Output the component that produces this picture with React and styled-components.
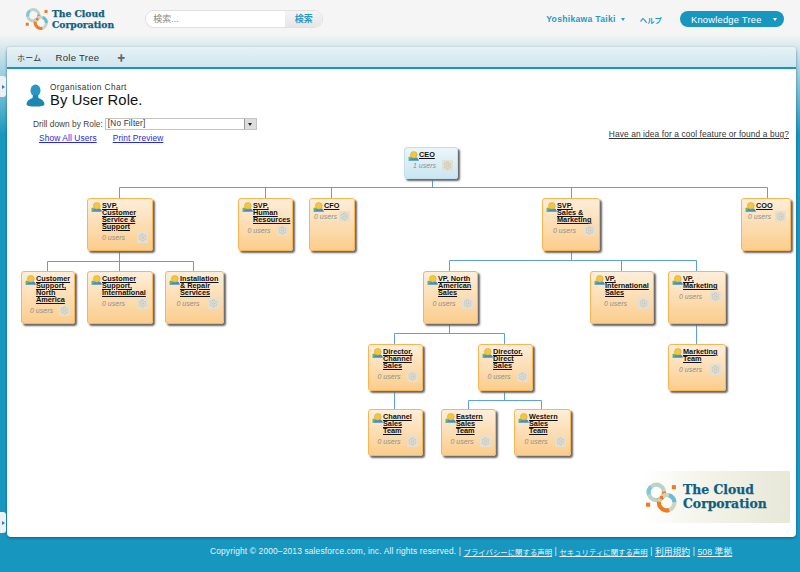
import React from 'react';
import styled, { createGlobalStyle } from 'styled-components';
import { Settings } from 'lucide-react';

const GlobalStyle = createGlobalStyle`
  html, body { margin: 0; padding: 0; }
  body { font-family: "Liberation Sans", "Noto Sans CJK JP", sans-serif; }
`;

const SANS = `"Liberation Sans", "Noto Sans CJK JP", sans-serif`;
const BLUE = '#1797c0';

const Page = styled.div`
  position: relative;
  width: 800px;
  height: 572px;
  overflow: hidden;
  display: flex;
  flex-direction: column;
  background: linear-gradient(#f5f5f5 0, #f5f5f5 34px, ${BLUE} 135px, ${BLUE} 100%);
`;

const Header = styled.header`
  height: 47px;
  flex: none;
  display: flex;
  align-items: flex-start;
  padding: 7px 16px 0 25px;
  box-sizing: border-box;
`;

const LogoWrap = styled.div`
  display: flex;
  align-items: center;
  gap: ${p => p.$gap}px;
`;

const LogoText = styled.div`
  font-family: "DejaVu Serif", serif;
  font-weight: 700;
  color: #0e5f80;
  font-size: ${p => p.$size}px;
  line-height: ${p => p.$line}px;
  white-space: pre-line;
  -webkit-text-stroke: 0.25px #0e5f80;
`;

const SearchBox = styled.div`
  display: flex;
  width: 176px;
  height: 16px;
  margin: 4px 0 0 32px;
  border-radius: 8px;
  overflow: hidden;
  box-shadow: 0 0 0 1px #e0e0e0;
  background: #fff;
`;

const SearchInput = styled.div`
  flex: 1;
  padding-left: 7px;
  font-size: 9px;
  line-height: 16px;
  color: #8a8a8a;
`;

const SearchButton = styled.div`
  width: 37px;
  background: linear-gradient(#f4f4f4, #e6e6e6);
  color: #2a9cc4;
  font-size: 9px;
  font-weight: 700;
  line-height: 16px;
  text-align: center;
`;

const HeaderRight = styled.div`
  margin-left: auto;
  display: flex;
  align-items: center;
  height: 16px;
  margin-top: 4px;
`;

const UserMenu = styled.div`
  color: #1f9bc6;
  font-size: 8.6px;
  font-weight: 700;
  letter-spacing: 0.3px;
  margin-right: 15px;
  display: flex;
  align-items: center;
  gap: 5px;
`;

const Caret = styled.span`
  width: 0;
  height: 0;
  border-left: 2.5px solid transparent;
  border-right: 2.5px solid transparent;
  border-top: 3px solid ${p => p.$color};
`;

const HelpLink = styled.div`
  color: #1f9bc6;
  font-size: 7.4px;
  font-weight: 700;
  margin-right: 18px;
`;

const AppPill = styled.div`
  width: 104px;
  height: 16px;
  box-sizing: border-box;
  background: ${BLUE};
  border-radius: 8px;
  color: #fff;
  font-size: 9.4px;
  letter-spacing: 0.2px;
  display: flex;
  align-items: center;
  justify-content: space-between;
  padding: 0 7px 0 11px;
`;

const Panel = styled.main`
  flex: 1;
  margin: 0 4px 0 7px;
  border-radius: 4px;
  background: #fff;
  display: flex;
  flex-direction: column;
  box-shadow: 0 1px 3px rgba(0, 60, 90, 0.6);
  min-height: 0;
`;

const TabBar = styled.nav`
  height: 20px;
  flex: none;
  box-sizing: content-box;
  border-bottom: 2px solid ${BLUE};
  border-radius: 4px 4px 0 0;
  background: linear-gradient(#e6f2f6, #cfe6ee);
  display: flex;
  align-items: center;
  padding-left: 10px;
  font-size: 9.6px;
  letter-spacing: 0.25px;
  color: #333;
`;

const Tab = styled.span`
  margin-right: ${p => p.$gap}px;
  font-size: ${p => p.$size}px;
  color: ${p => p.$color || '#333'};
  font-weight: ${p => (p.$bold ? 700 : 400)};
`;

const TitleRow = styled.div`
  display: flex;
  gap: 5px;
  padding: 15px 0 0 19px;
  height: 28px;
`;

const TitleText = styled.div`
  display: flex;
  flex-direction: column;
`;

const Eyebrow = styled.div`
  font-size: 8.2px;
  line-height: 8px;
  letter-spacing: 0.45px;
  color: #333;
`;

const Heading = styled.h1`
  margin: 0;
  font-size: 14.8px;
  line-height: 17px;
  font-weight: 400;
  color: #111;
  letter-spacing: 0.1px;
`;

const FilterRow = styled.div`
  display: flex;
  align-items: center;
  gap: 2px;
  height: 12px;
  margin: 6px 0 0 26px;
  font-size: 8.4px;
  color: #444;
`;

const FakeSelect = styled.div`
  width: 152px;
  height: 12px;
  box-sizing: border-box;
  border: 1px solid #c4c4c4;
  background: #fff;
  color: #333;
  font-size: 8.2px;
  line-height: 10px;
  padding-left: 2px;
  position: relative;
  letter-spacing: 0.2px;
`;

const SelectArrow = styled.span`
  position: absolute;
  right: 0;
  top: 0;
  width: 11px;
  height: 10px;
  background: #ddd;
  border-left: 1px solid #999;
  display: flex;
  align-items: center;
  justify-content: center;
`;

const LinkRow = styled.div`
  display: flex;
  align-items: center;
  height: 12px;
  margin: 2px 7px 1px 32px;
  font-size: 8.4px;
`;

const BlueLink = styled.a`
  color: #2a2ae0;
  text-decoration: underline;
  margin-right: 16px;
  letter-spacing: 0.1px;
`;

const BugLink = styled.a`
  margin-left: auto;
  color: #333;
  text-decoration: underline;
  margin-top: -8px;
  letter-spacing: 0.1px;
`;

const Chart = styled.div`
  position: relative;
  flex: none;
  height: 326px;
`;

const Connectors = styled.svg`
  position: absolute;
  left: 0;
  top: 0;
`;

const Node = styled.div`
  position: absolute;
  left: ${p => p.$x - 7}px;
  top: ${p => p.$y - 145}px;
  width: ${p => p.$w}px;
  height: ${p => p.$h}px;
  box-sizing: border-box;
  padding: 3px 4px 0 14px;
  border-radius: 3px;
  border: 1.5px solid ${p => (p.$root ? '#bfe0ee' : '#f9b555')};
  background: ${p =>
    p.$root
      ? 'linear-gradient(#eaf6fb, #cbe6f2)'
      : 'linear-gradient(#fdeeda, #fbcd8c)'};
  box-shadow: 2px 2px 2px #666;
`;

const RoleIcon = styled.svg`
  position: absolute;
  left: 3px;
  top: 3px;
`;

const NodeTitle = styled.a`
  display: block;
  font-size: 7.3px;
  line-height: 7px;
  font-weight: 700;
  color: #111;
  text-decoration: underline;
  white-space: pre-line;
`;

const NodeFoot = styled.div`
  display: flex;
  align-items: center;
  margin: 2px 0 0 -12px;
`;

const UsersCount = styled.span`
  flex: 1;
  text-align: center;
  font-size: 7px;
  font-style: italic;
  color: #8d8d8d;
`;

const GearBox = styled.span`
  width: 11px;
  height: 11px;
  flex: none;
  background: #e2dfd3;
  color: #bcb8ab;
  border-radius: 1px;
  display: flex;
  align-items: center;
  justify-content: center;
`;

const Banner = styled.div`
  align-self: flex-end;
  width: 147px;
  height: 52px;
  margin-right: 6px;
  box-sizing: border-box;
  padding-left: 2px;
  display: flex;
  align-items: center;
  background: linear-gradient(90deg, #fff 0, #f1f1e6 50%, #e8e8d8 100%);
`;

const Footer = styled.footer`
  height: 35px;
  flex: none;
  display: flex;
  align-items: center;
  padding: 0 0 7px 210px;
  box-sizing: border-box;
  color: #e6f4f9;
  font-size: 8.4px;
  letter-spacing: 0.16px;
  white-space: pre;
  font-family: ${SANS};
`;

const FootLink = styled.a`
  color: #e6f4f9;
  text-decoration: underline;
  font-size: ${p => p.$size}px;
  letter-spacing: 0;
`;

const SideHandle = styled.div`
  position: absolute;
  left: 0;
  top: ${p => p.$top}px;
  width: 6px;
  height: 21px;
  background: #eef1f3;
  border-radius: 0 3px 3px 0;
  display: flex;
  align-items: center;
  justify-content: center;
  &::after {
    content: '';
    border-left: 3px solid #3b6fd0;
    border-top: 2px solid transparent;
    border-bottom: 2px solid transparent;
  }
`;

const CloudLogo = ({ size }) => (
  <svg width={size} height={size} viewBox="0 0 32 32" fill="none">
    <g strokeWidth="4" transform="rotate(-20 11 11)">
      <circle cx="11" cy="11" r="7.5" stroke="#bcd3c8" />
      <circle cx="11" cy="11" r="7.5" stroke="#f07c22" strokeDasharray="11 36" strokeDashoffset="-2" />
      <circle cx="11" cy="11" r="7.5" stroke="#7fc8dc" strokeDasharray="8 39" strokeDashoffset="-24" />
    </g>
    <g strokeWidth="4" transform="rotate(10 21 21)">
      <circle cx="21" cy="21" r="7.5" stroke="#c9d5c6" />
      <circle cx="21" cy="21" r="7.5" stroke="#f07c22" strokeDasharray="15 32" strokeDashoffset="-8" />
      <circle cx="21" cy="21" r="7.5" stroke="#69bcd6" strokeDasharray="9 38" strokeDashoffset="-36" />
    </g>
    <rect x="1" y="21" width="4" height="4" fill="#f07c22" />
    <rect x="26" y="4" width="4" height="4" fill="#f07c22" />
    <rect x="14.5" y="14.5" width="3" height="3" fill="#f07c22" />
  </svg>
);

const PersonIcon = () => (
  <svg width="19" height="23" viewBox="0 0 19 23">
    <ellipse cx="9.5" cy="6.5" rx="5" ry="6" fill="#2a97c2" />
    <path d="M7 11 L12 11 L12.5 14 C15 15 18 16.5 18.5 20 C18.5 22 15 22.5 9.5 22.5 C4 22.5 .5 22 .5 20 C1 16.5 4 15 6.5 14 Z" fill="#1c87b2" />
  </svg>
);

const RoleGlyph = () => (
  <RoleIcon width="11" height="10" viewBox="0 0 11 10">
    <path d="M.5 9.8 C.5 6.8 3 6 5.5 6 C8 6 10.8 6.8 10.8 9.8 Z" fill="#3f8fd0" />
    <circle cx="5.8" cy="3.8" r="3.4" fill="#f3c63e" stroke="#c9962a" strokeWidth="0.4" />
    <circle cx="1.8" cy="7" r="1.5" fill="#6cc04a" />
  </RoleIcon>
);

const links = [
  'M432 178V187', 'M119 187H767',
  'M119 187V198', 'M265 187V198', 'M331 187V198', 'M571 187V198', 'M767 187V198',
  'M119 250V261', 'M47 261H193', 'M47 261V271', 'M119 261V271', 'M193 261V271',
  'M571 250V260', 'M449 260H696', 'M449 260V271', 'M621 260V271', 'M696 260V271',
  'M449 323V333', 'M394 333H504', 'M394 333V344', 'M504 333V344',
  'M394 390V409',
  'M504 390V400', 'M468 400H541', 'M468 400V409', 'M541 400V409',
  'M696 323V344',
];

const nodes = [
  { title: 'CEO', users: '1 users', x: 404, y: 147, w: 54, h: 32, root: true },
  { title: 'SVP,\nCustomer\nService &\nSupport', x: 87, y: 198, w: 66, h: 53 },
  { title: 'SVP,\nHuman\nResources', x: 238, y: 198, w: 55, h: 53 },
  { title: 'CFO', x: 309, y: 198, w: 46, h: 53 },
  { title: 'SVP,\nSales &\nMarketing', x: 542, y: 198, w: 58, h: 53 },
  { title: 'COO', x: 741, y: 198, w: 50, h: 53 },
  { title: 'Customer\nSupport,\nNorth\nAmerica', x: 21, y: 271, w: 54, h: 53 },
  { title: 'Customer\nSupport,\nInternational', x: 87, y: 271, w: 66, h: 53 },
  { title: 'Installation\n& Repair\nServices', x: 165, y: 271, w: 59, h: 53 },
  { title: 'VP, North\nAmerican\nSales', x: 423, y: 271, w: 55, h: 53 },
  { title: 'VP,\nInternational\nSales', x: 590, y: 271, w: 64, h: 53 },
  { title: 'VP,\nMarketing', x: 668, y: 271, w: 58, h: 53 },
  { title: 'Director,\nChannel\nSales', x: 368, y: 344, w: 55, h: 47 },
  { title: 'Director,\nDirect\nSales', x: 478, y: 344, w: 55, h: 47 },
  { title: 'Marketing\nTeam', x: 668, y: 344, w: 58, h: 47 },
  { title: 'Channel\nSales\nTeam', x: 368, y: 409, w: 55, h: 47 },
  { title: 'Eastern\nSales\nTeam', x: 441, y: 409, w: 55, h: 47 },
  { title: 'Western\nSales\nTeam', x: 514, y: 409, w: 57, h: 47 },
];

const App = () => {
  return (
    <Page>
      <GlobalStyle />
      <Header>
        <LogoWrap $gap={3}>
          <CloudLogo size={24} />
          <LogoText $size={9.2} $line={11}>{'The Cloud\nCorporation'}</LogoText>
        </LogoWrap>
        <SearchBox>
          <SearchInput>検索...</SearchInput>
          <SearchButton>検索</SearchButton>
        </SearchBox>
        <HeaderRight>
          <UserMenu>Yoshikawa Taiki <Caret $color="#1f9bc6" /></UserMenu>
          <HelpLink>ヘルプ</HelpLink>
          <AppPill>Knowledge Tree <Caret $color="#fff" /></AppPill>
        </HeaderRight>
      </Header>

      <Panel>
        <TabBar>
          <Tab $gap={14} $size={8}>ホーム</Tab>
          <Tab $gap={18}>Role Tree</Tab>
          <Tab $gap={0} $size={8} $color="#666" $bold>✚</Tab>
        </TabBar>
        <TitleRow>
          <PersonIcon />
          <TitleText>
            <Eyebrow>Organisation Chart</Eyebrow>
            <Heading>By User Role.</Heading>
          </TitleText>
        </TitleRow>
        <FilterRow>
          Drill down by Role:
          <FakeSelect>
            [No Filter]
            <SelectArrow><Caret $color="#222" /></SelectArrow>
          </FakeSelect>
        </FilterRow>
        <LinkRow>
          <BlueLink>Show All Users</BlueLink>
          <BlueLink>Print Preview</BlueLink>
          <BugLink>Have an idea for a cool feature or found a bug?</BugLink>
        </LinkRow>
        <Chart>
          <Connectors width="789" height="326" viewBox="6.5 144.5 789 326" fill="none" stroke="#5c9fe8">
            {links.map(d => <path key={d} d={d} />)}
          </Connectors>
          {nodes.map(n => (
            <Node key={n.title} $x={n.x} $y={n.y} $w={n.w} $h={n.h} $root={n.root}>
              <RoleGlyph />
              <NodeTitle>{n.title}</NodeTitle>
              <NodeFoot>
                <UsersCount>{n.users || '0 users'}</UsersCount>
                <GearBox><Settings size={9} strokeWidth={1.5} /></GearBox>
              </NodeFoot>
            </Node>
          ))}
        </Chart>
        <Banner>
          <LogoWrap $gap={5}>
            <CloudLogo size={33} />
            <LogoText $size={12.4} $line={14}>{'The Cloud\nCorporation'}</LogoText>
          </LogoWrap>
        </Banner>
      </Panel>

      <Footer>
        Copyright © 2000–2013 salesforce.com, inc. All rights reserved. | <FootLink $size={7.4}>プライバシーに関する声明</FootLink> | <FootLink $size={7.4}>セキュリティに関する声明</FootLink> | <FootLink $size={8.8}>利用規約</FootLink> | <FootLink $size={8.8}>508 準拠</FootLink>
      </Footer>

      <SideHandle $top={76} />
      <SideHandle $top={512} />
    </Page>
  );
};

export default App;
